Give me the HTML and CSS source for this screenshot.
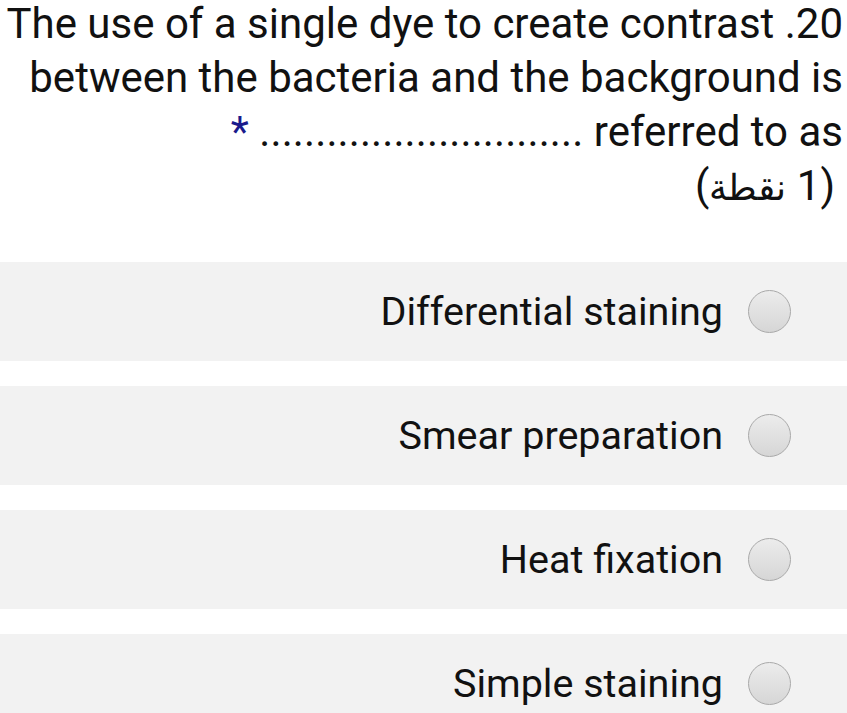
FILE: index.html
```html
<!DOCTYPE html>
<html lang="ar">
<head>
<meta charset="utf-8">
<link rel="stylesheet" href="styles.css">
</head>
<body>
<div class="page">
  <div class="question">
    <div class="qline">The use of a single dye to create contrast .20</div>
    <div class="qline">between the bacteria and the background is</div>
    <div class="qline"><span class="star">*</span> <span class="dots">.............................</span> referred to as</div>
    <div class="qline points" dir="rtl">(1 <span class="ar">نقطة</span>)</div>
  </div>
  <div class="options">
    <label class="option"><span class="label">Differential staining</span><span class="radio"></span></label>
    <label class="option"><span class="label">Smear preparation</span><span class="radio"></span></label>
    <label class="option"><span class="label">Heat fixation</span><span class="radio"></span></label>
    <label class="option"><span class="label">Simple staining</span><span class="radio"></span></label>
  </div>
</div>
</body>
</html>
```
FILE: styles.css
```css
html, body {
  margin: 0;
  padding: 0;
  background: #ffffff;
}
.page {
  width: 847px;
  height: 713px;
  overflow: hidden;
  font-family: Roboto, "Noto Sans", sans-serif;
  color: #111111;
}
.question {
  margin-top: -3px;
  padding: 0 4px 0 0;
  height: 265px;
  box-sizing: border-box;
  text-align: right;
  font-size: 42px;
}
.qline {
  line-height: 54px;
  white-space: nowrap;
}
.star {
  color: #1a1a8c;
}
.dots {
  letter-spacing: 0.1px;
}
.points {
  padding-right: 8px;
}
.ar {
  font-size: 36px;
}
.options {
  display: flex;
  flex-direction: column;
  gap: 25px;
}
.option {
  height: 99px;
  background: #f2f2f2;
  display: flex;
  align-items: center;
  justify-content: flex-end;
  gap: 25px;
  padding-right: 56px;
  font-size: 39.5px;
}
.radio {
  width: 41px;
  height: 41px;
  border-radius: 50%;
  border: 1px solid #a9a9a9;
  background: linear-gradient(#ececec, #d6d6d6);
  flex: none;
}
```
